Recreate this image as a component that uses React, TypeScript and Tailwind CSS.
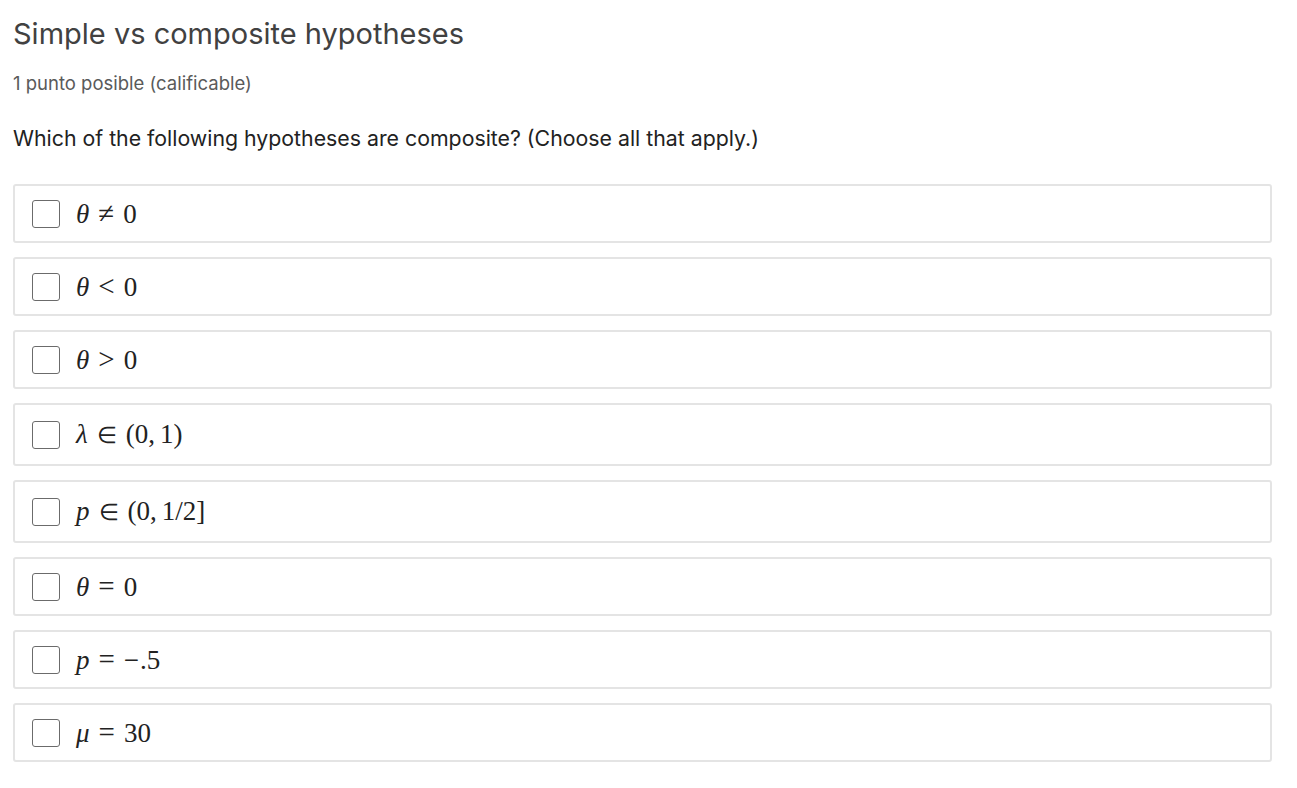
const Rel = ({ children, small }: { children: React.ReactNode; small?: boolean }) => (
  <span className={`mx-[9px] ${small ? "text-[23px]" : "text-[29px]"}`}>{children}</span>
);

const options: { id: number; math: React.ReactNode; tall?: boolean }[] = [
  { id: 1, math: (<><i>θ</i><Rel>≠</Rel>0</>) },
  { id: 2, math: (<><i>θ</i><Rel>&lt;</Rel>0</>) },
  { id: 3, math: (<><i>θ</i><Rel>&gt;</Rel>0</>) },
  {
    id: 4,
    tall: true,
    math: (<><i>λ</i><Rel small>∈</Rel>(0,<span className="ml-[5px]">1)</span></>),
  },
  {
    id: 5,
    tall: true,
    math: (<><i>p</i><Rel small>∈</Rel>(0,<span className="ml-[5px]">1/2]</span></>),
  },
  { id: 6, math: (<><i>θ</i><Rel>=</Rel>0</>) },
  { id: 7, math: (<><i>p</i><Rel>=</Rel><span className="mr-[1px]">−</span>.5</>) },
  { id: 8, math: (<><i>μ</i><Rel>=</Rel>30</>) },
];

export default function App() {
  return (
    <div className="min-h-screen bg-white px-[13px] pt-[15px] font-['Inter','Noto_Sans',sans-serif]">
      <h2 className="text-[29px] leading-[37px] text-[#414141]">Simple vs composite hypotheses</h2>
      <div className="mt-[19px] text-[18.5px] leading-[24px] text-[#5a5a5a]">1 punto posible (calificable)</div>
      <p className="mt-[29px] text-[21.3px] leading-[28px] text-[#222]">
        Which of the following hypotheses are composite? (Choose all that apply.)
      </p>
      <div className="mt-[32px] flex w-[1259px] flex-col gap-[14px]">
        {options.map((o) => (
          <label
            key={o.id}
            className={`flex items-center rounded-[3px] border-2 border-[#e4e4e4] pl-[17px] ${
              o.tall ? "h-[63px]" : "h-[59px]"
            }`}
          >
            <span className="h-[28px] w-[28px] shrink-0 rounded-[3px] border-[1.5px] border-[#6b6b6b] bg-white" />
            <span className="ml-[16px] font-['Liberation_Serif',serif] text-[27px] leading-none text-[#222]">{o.math}</span>
          </label>
        ))}
      </div>
    </div>
  );
}
